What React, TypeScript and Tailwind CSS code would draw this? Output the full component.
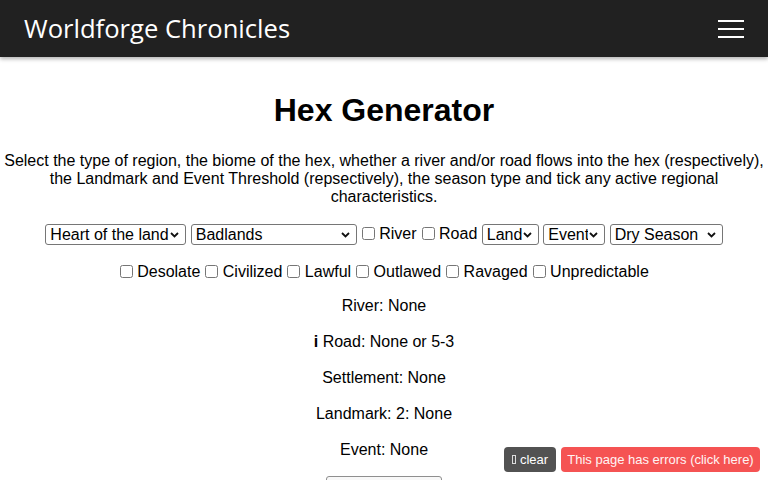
import React from "react";

function Sel({ w, label }: { w: string; label: string }) {
  return (
    <span className={"relative inline-block align-middle h-[21px] " + w}>
      <select
        defaultValue="x"
        className="appearance-none w-full h-[21px] border border-[#767676] rounded-[3px] bg-white text-black text-[16px] leading-[19px] pl-[4px] pr-[16px] block"
      >
        <option value="x">{label}</option>
      </select>
      <svg className="absolute right-[7px] top-[8px] pointer-events-none" width="9" height="6" viewBox="0 0 9 6">
        <path d="M1 1 L4.5 4.5 L8 1" fill="none" stroke="#111" strokeWidth="1.8" />
      </svg>
    </span>
  );
}

function Cb({ label }: { label: string }) {
  return (
    <label className="whitespace-nowrap">
      <input type="checkbox" className="w-[13px] h-[13px] ml-[0.5px] mr-[4.5px] my-0 align-[-1px]" />
      {label}
    </label>
  );
}

export default function App() {
  return (
    <div className="min-h-[480px] bg-white text-black" style={{ fontFamily: '"Liberation Sans", Arial, sans-serif' }}>
      <header className="h-[57px] bg-[#212121] flex items-center justify-between pl-[24px] pr-[24px] shadow-[0_2px_4px_rgba(0,0,0,0.3)] relative z-10">
        <div className="text-white text-[25.6px] leading-none" style={{ fontFamily: '"Open Sans", sans-serif' }}>Worldforge Chronicles</div>
        <div className="flex flex-col gap-[6px] w-[26px]">
          <div className="h-[2px] bg-white" />
          <div className="h-[2px] bg-white" />
          <div className="h-[2px] bg-white" />
        </div>
      </header>
      <main className="text-center px-[4px]">
        <h1 className="mt-[35px] text-[32px] leading-[37px] font-bold">Hex Generator</h1>
        <p className="mt-[23px] text-[16px] leading-[18px]">
          Select the type of region, the biome of the hex, whether a river and/or road flows into the hex (respectively), the Landmark and Event Threshold (repsectively), the season type and tick any active regional characteristics.
        </p>
        <div className="mt-[17px] text-[16px] leading-[22px] whitespace-nowrap">
          <Sel w="w-[141px]" label="Heart of the land" />{" "}
          <Sel w="w-[166px]" label="Badlands" />{" "}
          <Cb label="River" />{" "}
          <Cb label="Road" />{" "}
          <Sel w="w-[57px]" label="Land" />{" "}
          <Sel w="w-[62px]" label="Event" />{" "}
          <Sel w="w-[113px]" label="Dry Season" />
        </div>
        <div className="mt-[17px] text-[16px] leading-[20px] whitespace-nowrap">
          <Cb label="Desolate" />{" "}
          <Cb label="Civilized" />{" "}
          <Cb label="Lawful" />{" "}
          <Cb label="Outlawed" />{" "}
          <Cb label="Ravaged" />{" "}
          <Cb label="Unpredictable" />
        </div>
        <div className="mt-[15px] text-[16px] leading-[18px] flex flex-col gap-[18px]">
          <p>River: None</p>
          <p><b>i</b> Road: None or 5-3</p>
          <p>Settlement: None</p>
          <p>Landmark: 2: None</p>
          <p>Event: None</p>
        </div>
        <div className="mt-[17px] flex justify-center">
          <button className="w-[116px] h-[28px] border border-[#8f8f8f] rounded-[3px] bg-[#f8f8f8]"> </button>
        </div>
      </main>
      <div className="fixed right-[8px] bottom-[8px] flex gap-[5px] text-[13px] leading-[25px]">
        <div className="h-[25px] w-[52px] rounded-[4px] bg-[#525252] text-white flex items-center justify-center gap-[4px]">
          <span className="inline-block w-[4px] h-[9px] border border-white/80" />
          <span>clear</span>
        </div>
        <div className="h-[25px] w-[199px] rounded-[4px] bg-[#f55353] text-[#fff3f3] flex items-center justify-center">This page has errors (click here)</div>
      </div>
    </div>
  );
}
